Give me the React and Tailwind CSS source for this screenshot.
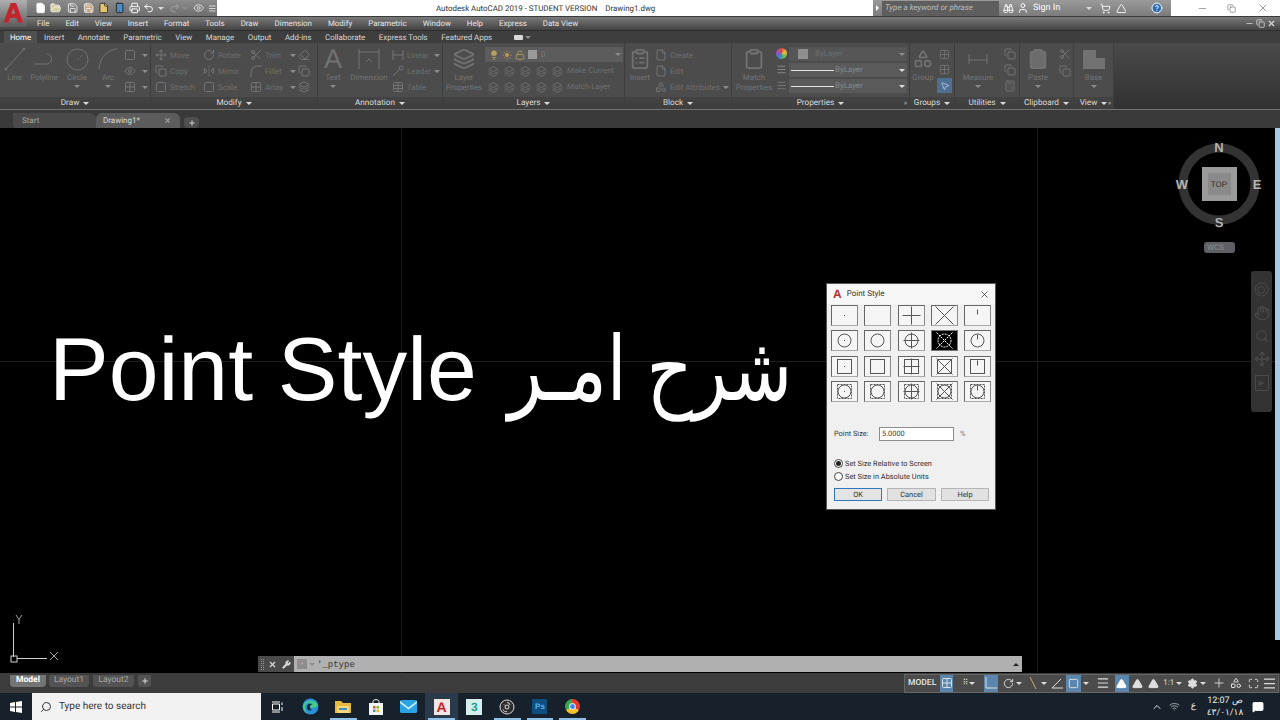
import React from "react";
import {
  Binoculars, ChevronUp, CircleHelp, Copy, Eraser, File, FlipHorizontal2, FolderOpen, Grid2x2, Hand,
  Layers, Lightbulb, LockOpen, Menu, MessageSquare, Minus, Move, Plus, Printer, Redo2, RotateCw,
  Save, Scissors, Search, Settings, ShoppingCart, Smartphone, Square, Sun, Table, Undo2, User, Wifi,
  Wrench, X, Clipboard, Calculator, Eye, Shapes, Maximize, Triangle, ClipboardList, MousePointer2,
} from "lucide-react";

const Caret = ({ dim }) => (
  <span
    className={
      dim
        ? "inline-block h-0 w-0 border-x-[3px] border-t-[3px] border-x-transparent border-t-[#8c8c8c]"
        : "inline-block h-0 w-0 border-x-[3px] border-t-[3px] border-x-transparent border-t-[#dddddd]"
    }
  />
);

const MENU = ["File", "Edit", "View", "Insert", "Format", "Tools", "Draw", "Dimension", "Modify", "Parametric", "Window", "Help", "Express", "Data View"];
const TABS = ["Insert", "Annotate", "Parametric", "View", "Manage", "Output", "Add-ins", "Collaborate", "Express Tools", "Featured Apps"];

function QuickAccess() {
  const ic = "h-[12px] w-[12px]";
  return (
    <div className="flex h-[16px] w-[190px] items-center bg-gradient-to-b from-[#8c8c8c] to-[#6e6e6e] pl-[8px] text-[#f2f2f2]">
      <File className={ic + " mr-[4px] fill-white"} />
      <FolderOpen className={ic + " mr-[5px] fill-[#d9cda0] text-[#eeeeee]"} />
      <Save className={ic + " mr-[5px] text-[#e8e8e8]"} />
      <Save className={ic + " mr-[4px] fill-[#c9a37a] text-[#e8e8e8]"} />
      <File className={ic + " mr-[4px] fill-[#e4c46c] text-[#333333]"} />
      <Smartphone className={ic + " mr-[4px] fill-[#4e8ec4] text-[#222222]"} />
      <Printer className={ic + " mr-[3px] text-white"} />
      <Undo2 className={ic + " mr-[3px] text-white"} />
      <span className="mr-[5px] flex"><Caret /></span>
      <Redo2 className={ic + " mr-[2px] text-[#a0a0a0]"} />
      <span className="mr-[5px] flex"><Caret dim /></span>
      <Eye className={ic + " mr-[4px] text-[#dddddd]"} />
      <Menu className="h-[9px] w-[9px] text-white" />
    </div>
  );
}

function TitleBar() {
  return (
    <div className="flex h-[16px] items-center bg-white pl-[27px]">
      <QuickAccess />
      <div className="ml-[219px] w-[437px] truncate text-[7.9px] leading-[17px] text-[#333333]">
        Autodesk AutoCAD 2019 - STUDENT VERSION<span className="ml-[8px]">Drawing1.dwg</span>
      </div>
      <div className="flex h-[16px] w-[298px] items-center bg-gradient-to-b from-[#9a9a9a] to-[#7c7c7c] text-[8px] text-[#222222]">
        <span className="ml-[3px] mr-[3px] h-0 w-0 border-y-[3px] border-l-[3px] border-y-transparent border-l-white" />
        <div className="flex h-[15px] w-[120px] items-center bg-[#5e5e5e] pl-[3px] italic text-[#bdbdbd]">Type a keyword or phrase</div>
        <Binoculars className="ml-[4px] h-[11px] w-[11px] text-white" />
        <User className="ml-[3px] h-[12px] w-[12px] text-white" />
        <span className="ml-[4px] w-[54px] pt-[2px] text-[9px] text-white">Sign In</span>
        <Caret />
        <ShoppingCart className="ml-[8px] h-[11px] w-[11px] text-white" />
        <Triangle className="ml-[5px] h-[11px] w-[11px] text-white" />
        <span className="ml-[2px] mr-[17px] flex"><Caret dim /></span>
        <CircleHelp className="h-[12px] w-[12px] fill-[#2f6db5] text-white" />
        <span className="ml-[2px] flex"><Caret dim /></span>
      </div>
      <div className="flex flex-1 items-center text-[#333333]">
        <Minus className="ml-[26px] h-[11px] w-[11px]" strokeWidth={1} />
        <Copy className="ml-[19px] h-[9px] w-[9px]" strokeWidth={1.2} />
        <X className="ml-[21px] h-[12px] w-[12px]" strokeWidth={1} />
      </div>
    </div>
  );
}

function MenuBar() {
  return (
    <div className="flex h-[14px] items-center border-t border-[#3a3a3a] bg-gradient-to-b from-[#7a7a7a] to-[#434343] pl-[37px] text-[7.9px] text-[#e6e6e6]">
      <div className="flex gap-x-[16px] pt-[1px]">
        {MENU.map((m) => (
          <span key={m}>{m}</span>
        ))}
      </div>
      <div className="ml-auto mr-[4px] flex items-center gap-x-[2px] text-[#dddddd]">
        <Minus className="h-[9px] w-[9px]" />
        <Copy className="h-[9px] w-[9px]" />
        <X className="h-[9px] w-[9px]" strokeWidth={3} />
      </div>
    </div>
  );
}

function RibbonTabs() {
  return (
    <div className="flex h-[13px] items-end border-t border-[#2e2e2e] bg-[#3e3e3e] pl-[4px] text-[7.9px] text-[#d6d6d6]">
      <span className="flex h-[12px] w-[33px] items-center justify-center bg-[#505050] pt-[1px] text-white">Home</span>
      <div className="ml-[7px] flex h-[12px] items-center gap-x-[13.5px] pt-[1px]">
        {TABS.map((t) => (
          <span key={t}>{t}</span>
        ))}
        <span className="ml-[8px] flex items-center gap-x-[2px]">
          <span className="h-[5px] w-[9px] rounded-[1px] bg-[#d8d8d8]" />
          <Caret dim />
        </span>
      </div>
    </div>
  );
}

// dim ribbon label, everything in the ribbon is greyed out because a dialog is open
function Big({ label, width, icon, caret }) {
  return (
    <div className={"flex flex-col items-center whitespace-nowrap text-center text-[7.9px] leading-[10px] text-[#747474] " + width}>
      <div className="flex h-[24px] items-center justify-center text-[#727272]">{icon}</div>
      <span className="mt-[1.5px]">{label}</span>
      {caret && <span className="mt-[2px] flex"><Caret dim /></span>}
    </div>
  );
}

function Small({ icon, label, caret, width }) {
  return (
    <div className={"flex h-[16px] items-center gap-x-[3px] whitespace-nowrap text-[7.9px] text-[#6e6e6e] " + width}>
      <span className="flex w-[12px] justify-center text-[#747474]">{icon}</span>
      {label && <span className="pt-[1px]">{label}</span>}
      {caret && <span className="ml-auto flex pr-[2px]"><Caret dim /></span>}
    </div>
  );
}

function Panel({ width, title, launcher, children }) {
  return (
    <div className={"flex h-[66px] shrink-0 flex-col border-r border-[#3d3d3d] " + width}>
      <div className="flex h-[54px] bg-[#4c4c4c] pt-[4px]">{children}</div>
      <div className="relative flex h-[12px] items-center justify-center gap-x-[4px] bg-gradient-to-b from-[#434343] to-[#3e3e3e] pt-[1px] text-[8.2px] text-[#dcdcdc]">
        {title}
        <Caret />
        {launcher && <span className="absolute right-[2px] text-[7px] leading-none text-[#aaaaaa]">»</span>}
      </div>
    </div>
  );
}

const I = "h-[12px] w-[12px]";

const Draw = (
  <Panel width="w-[151px]" title="Draw">
    <Big width="w-[29px]" label="Line" icon={<svg width="22" height="24" fill="none" stroke="currentColor"><path d="M2 22 20 2" /><circle cx="2" cy="22" r="1" fill="currentColor" /><circle cx="20" cy="2" r="1" fill="currentColor" /></svg>} />
    <Big width="w-[30px]" label="Polyline" icon={<svg width="24" height="16" fill="none" stroke="currentColor"><path d="M2 13H15C21 13 21 3 15 3" /></svg>} />
    <Big width="w-[36px]" label="Circle" caret icon={<svg width="23" height="23" fill="none" stroke="currentColor"><circle cx="11.5" cy="11.5" r="10.5" /><path d="M11.5 11.5 17 6" strokeDasharray="2 2" /></svg>} />
    <Big width="w-[26px]" label="Arc" caret icon={<svg width="22" height="24" fill="none" stroke="currentColor"><path d="M2 22C3 10 10 3 20 2" /></svg>} />
    <div className="w-[29px] pl-[3px]">
      <Small icon={<Square className={I} />} caret />
      <Small icon={<Eye className={I} />} caret />
      <Small icon={<Grid2x2 className={I} />} caret />
    </div>
  </Panel>
);

const Modify = (
  <Panel width="w-[167px]" title="Modify">
    <div className="w-[52px] pl-[4px]">
      <Small label="Move" icon={<Move className={I} />} />
      <Small label="Copy" icon={<Copy className={I} />} />
      <Small label="Stretch" icon={<Square className={I} />} />
    </div>
    <div className="w-[47px]">
      <Small label="Rotate" icon={<RotateCw className={I} />} />
      <Small label="Mirror" icon={<FlipHorizontal2 className={I} />} />
      <Small label="Scale" icon={<Square className={I} />} />
    </div>
    <div className="w-[48px]">
      <Small caret label="Trim" icon={<Scissors className={I} />} />
      <Small caret label="Fillet" icon={<svg width="12" height="12" fill="none" stroke="currentColor"><path d="M1 12V8C1 4 4 1 8 1H12" /></svg>} />
      <Small caret label="Array" icon={<Grid2x2 className={I} />} />
    </div>
    <div className="w-[19px]">
      <Small icon={<Eraser className={I} />} />
      <Small icon={<Copy className={I} />} />
      <Small icon={<Layers className={I} />} />
    </div>
  </Panel>
);

const Annotation = (
  <Panel width="w-[125px]" title="Annotation">
    <Big width="w-[30px]" label="Text" caret icon={<span className="font-['Liberation_Sans',sans-serif] text-[27px] leading-[24px]">A</span>} />
    <Big width="w-[42px]" label="Dimension" icon={<svg width="22" height="22" fill="none" stroke="currentColor"><path d="M1 1V21M21 1V21M1 4H21M8 14l3-3 3 3" /></svg>} />
    <div className="w-[52px] pl-[2px]">
      <Small caret label="Linear" icon={<svg width="12" height="10" fill="none" stroke="currentColor"><path d="M1 0V10M11 0V10M1 5H11" /></svg>} />
      <Small caret label="Leader" icon={<svg width="12" height="12" fill="none" stroke="currentColor"><path d="M1 11 7 5" /><circle cx="9" cy="3" r="2" /></svg>} />
      <Small label="Table" icon={<Table className={I} />} />
    </div>
  </Panel>
);

const Layer = () => <Layers className="h-[11px] w-[11px]" />;

const LayersPanel = (
  <Panel width="w-[182px]" title="Layers">
    <Big width="w-[42px]" label={<>Layer<br />Properties</>} icon={<Layers className="h-[22px] w-[22px]" />} />
    <div className="w-[138px]">
      <div className="flex h-[15px] items-center gap-x-[3px] rounded-[1px] bg-[#5c5c5c] pl-[4px] pr-[2px] text-[7.9px] text-[#7c7c7c]">
        <Lightbulb className="h-[10px] w-[10px] fill-[#b6a05a] text-[#b6a05a]" />
        <Sun className="h-[10px] w-[10px] fill-[#b8944f] text-[#b8944f]" />
        <LockOpen className="h-[10px] w-[10px] text-[#b6a05a]" />
        <span className="h-[9px] w-[9px] bg-[#9a9a9a]" />
        <span className="ml-[1px]">0</span>
        <span className="ml-auto flex"><Caret dim /></span>
      </div>
      <div className="mt-[1px] flex h-[16px] items-center gap-x-[5px] whitespace-nowrap pl-[3px] text-[7.9px] text-[#6e6e6e]">
        <Layer /><Layer /><Layer /><Layer /><Layer />
        <span className="-ml-[1px]">Make Current</span>
      </div>
      <div className="flex h-[16px] items-center gap-x-[5px] whitespace-nowrap pl-[3px] text-[7.9px] text-[#6e6e6e]">
        <Layer /><Layer /><Layer /><Layer /><Layer />
        <span className="-ml-[1px]">Match Layer</span>
      </div>
    </div>
  </Panel>
);

const Block = (
  <Panel width="w-[107px]" title="Block">
    <Big width="w-[30px]" label="Insert" icon={<ClipboardList className="h-[22px] w-[22px]" />} />
    <div className="w-[76px]">
      <Small label="Create" icon={<File className={I} />} />
      <Small label="Edit" icon={<File className={I} />} />
      <Small caret label="Edit Attributes" icon={<Shapes className={I} />} />
    </div>
  </Panel>
);

const ComboLine = () => (
  <div className="flex h-[14px] w-[118px] items-center rounded-[1px] bg-[#5a5a5a] pl-[2px] pr-[2px] text-[7.9px] text-[#8a8a8a]">
    <span className="h-px w-[43px] bg-[#e4e4e4]" />
    <span className="ml-[1px]">ByLayer</span>
    <span className="ml-auto flex"><Caret /></span>
  </div>
);

const Properties = (
  <Panel width="w-[178px]" title="Properties" launcher>
    <Big width="w-[44px]" label={<>Match<br />Properties</>} icon={<Clipboard className="h-[22px] w-[22px]" />} />
    <div className="w-[13px] pt-[1px]">
      <span className="block h-[11px] w-[11px] rounded-full bg-[conic-gradient(#e0483e,#e8c23c,#5cb85c,#3f7fd0,#a24fc0,#e0483e)]" />
      <Menu className="mt-[5px] h-[11px] w-[11px] text-[#8a8a8a]" />
      <Menu className="mt-[5px] h-[11px] w-[11px] text-[#787878]" />
    </div>
    <div className="flex w-[118px] flex-col gap-y-[2px]">
      <div className="flex h-[14px] items-center rounded-[1px] bg-[#565656] pl-[9px] pr-[2px] text-[7.9px] text-[#6e6e6e]">
        <span className="h-[10px] w-[10px] bg-[#8f8f8f]" />
        <span className="ml-[7px]">ByLayer</span>
        <span className="ml-auto flex"><Caret dim /></span>
      </div>
      <ComboLine />
      <ComboLine />
    </div>
  </Panel>
);

const Groups = (
  <Panel width="w-[45px]" title="Groups">
    <Big width="w-[26px]" label="Group" icon={<Shapes className="h-[20px] w-[20px]" />} />
    <div className="flex w-[17px] flex-col items-center text-[#727272]">
      <Grid2x2 className="mt-[2px] h-[11px] w-[11px]" />
      <Grid2x2 className="mt-[4px] h-[11px] w-[11px]" />
      <span className="mt-[3px] flex h-[15px] w-[15px] items-center justify-center bg-[#4d6f94]">
        <MousePointer2 className="h-[10px] w-[10px] text-[#b5c4d4]" />
      </span>
    </div>
  </Panel>
);

const Utilities = (
  <Panel width="w-[65px]" title="Utilities">
    <Big width="w-[46px]" label="Measure" caret icon={<svg width="20" height="10" fill="none" stroke="currentColor"><path d="M1 0V10M19 0V10M1 6H19" /></svg>} />
    <div className="flex w-[18px] flex-col items-center gap-y-[4px] pt-[1px] text-[#727272]">
      <Copy className={I} />
      <Copy className={I} />
      <Calculator className={I} />
    </div>
  </Panel>
);

const ClipboardPanel = (
  <Panel width="w-[54px]" title="Clipboard">
    <Big width="w-[36px]" label="Paste" caret icon={<Clipboard className="h-[22px] w-[22px] fill-[#6c6c6c]" />} />
    <div className="flex w-[17px] flex-col items-center gap-y-[5px] pt-[1px] text-[#727272]">
      <Scissors className={I} />
      <Copy className={I} />
    </div>
  </Panel>
);

const ViewPanel = (
  <Panel width="w-[40px]" title="View" launcher>
    <Big width="w-[40px]" label="Base" caret icon={<svg width="22" height="20" fill="currentColor"><path d="M0 1H13V9H22V20H0Z" /></svg>} />
  </Panel>
);

function Ribbon() {
  return (
    <div className="flex h-[67px] border-b border-[#737373] bg-gradient-to-b from-[#4a4a4a] to-[#323232]">
      {Draw}{Modify}{Annotation}{LayersPanel}{Block}{Properties}{Groups}{Utilities}{ClipboardPanel}{ViewPanel}
    </div>
  );
}

function DocTabs() {
  return (
    <div className="flex h-[18px] items-end bg-[#3a3a3a] pl-[13px] text-[8px]">
      <span className="flex h-[15px] w-[83px] items-center rounded-tr-[6px] rounded-bl-[3px] bg-[#4a4a4a] pl-[9px] text-[#a8a8a8]">Start</span>
      <span className="flex h-[15px] w-[84px] items-center rounded-tl-[6px] rounded-tr-[6px] bg-[#5c5c5c] pl-[7px] text-[#dddddd]">
        Drawing1*
        <X className="ml-auto mr-[9px] h-[7px] w-[7px] text-[#9a9a9a]" strokeWidth={4} />
      </span>
      <span className="ml-[4px] flex h-[11px] w-[15px] items-center justify-center rounded-[4px] bg-[#4e4e4e] text-[#cccccc]">
        <Plus className="h-[8px] w-[8px]" strokeWidth={3} />
      </span>
    </div>
  );
}

function PointSymbol({ row, col, selected }) {
  const c = selected ? "#ffffff" : "#555555";
  const dash = selected ? "2 1" : undefined;
  const cx = 12.5;
  const cy = 9.5;
  const a = row === 0 ? 9 : 8;
  return (
    <svg width="25" height="19" fill="none" stroke={c} strokeWidth="1" strokeDasharray={dash}>
      {col === 0 && <rect x="12" y="9" width="1" height="1" fill={c} stroke="none" />}
      {col === 2 && <path d={`M${cx - a} ${cy}H${cx + a}M${cx} ${cy - a}V${cy + a}`} />}
      {col === 3 && <path d={`M${cx - a} ${cy - a}L${cx + a} ${cy + a}M${cx + a} ${cy - a}L${cx - a} ${cy + a}`} />}
      {col === 4 && <path d={`M${cx} ${cy - 6}V${cy - 1}`} />}
      {(row === 1 || row === 3) && <circle cx={cx} cy={cy} r="6.5" />}
      {(row === 2 || row === 3) && <rect x={cx - 7} y={cy - 7} width="14" height="14" strokeDasharray={row === 3 ? "2 1" : dash} />}
    </svg>
  );
}

function PointStyleDialog() {
  return (
    <div className="absolute left-[827px] top-[156px] flex h-[225px] w-[168px] flex-col bg-[#f0f0f0] text-[7.4px] text-[#333333] outline outline-1 outline-[#555555]">
      <div className="flex h-[20px] items-center bg-[#f7f7f7] pl-[6px] pr-[5px] text-[8px]">
        <span className="font-['Liberation_Sans',sans-serif] text-[12px] font-bold leading-none text-[#b5322c]">A</span>
        <span className="ml-[5px]">Point Style</span>
        <X className="ml-auto h-[11px] w-[11px] text-[#222222]" strokeWidth={1.5} />
      </div>
      <div className="mt-[1px] grid w-[160px] grid-cols-[repeat(5,27px)] justify-between gap-y-[4.3px] self-center">
        {[0, 1, 2, 3].flatMap((row) =>
          [0, 1, 2, 3, 4].map((col) => {
            const selected = row === 1 && col === 3;
            return (
              <div
                key={row + "-" + col}
                className={selected
                  ? "flex h-[21px] w-[27px] items-center justify-center border border-[#777777] bg-black"
                  : "flex h-[21px] w-[27px] items-center justify-center border border-[#666666] border-b-[#aaaaaa] border-r-[#888888] bg-[#f5f5f5]"}
              >
                <PointSymbol row={row} col={col} selected={selected} />
              </div>
            );
          })
        )}
      </div>
      <div className="mt-[25px] flex h-[14px] items-center pl-[7px]">
        <span className="w-[45px]">Point Size:</span>
        <span className="flex h-[14px] w-[75px] items-center border border-[#8c8c8c] bg-white pl-[2px]">5.0000</span>
        <span className="ml-[6px] text-[#777777]">%</span>
      </div>
      <div className="mt-[16px] flex h-[13px] items-center pl-[7px]">
        <span className="flex h-[9px] w-[9px] items-center justify-center rounded-full border border-[#444444] bg-white">
          <span className="h-[5px] w-[5px] rounded-full bg-[#222222]" />
        </span>
        <span className="ml-[2px]">Set Size Relative to Screen</span>
      </div>
      <div className="flex h-[13px] items-center pl-[7px]">
        <span className="h-[9px] w-[9px] rounded-full border border-[#444444] bg-white" />
        <span className="ml-[2px]">Set Size in Absolute Units</span>
      </div>
      <div className="mt-[5px] flex gap-x-[5px] pl-[7px]">
        <span className="flex h-[13px] w-[48px] items-center justify-center border border-[#2f78c0] bg-[#e4e4e4]">OK</span>
        <span className="flex h-[13px] w-[49px] items-center justify-center border border-[#b5b5b5] bg-[#e1e1e1]">Cancel</span>
        <span className="flex h-[13px] w-[48px] items-center justify-center border border-[#b5b5b5] bg-[#e1e1e1]">Help</span>
      </div>
    </div>
  );
}

function ViewCube() {
  return (
    <div className="absolute left-[1170px] top-[6px]">
      <svg width="100" height="100" className="font-['Liberation_Sans',sans-serif]">
        <circle cx="49" cy="50" r="36" fill="none" stroke="#333333" strokeWidth="9" />
        <rect x="32" y="33" width="35" height="34" fill="#9a9a9a" />
        <rect x="38" y="39" width="23" height="22" fill="#8a8a8a" />
        <text x="49" y="53" textAnchor="middle" fontSize="8" fill="#2b2b2b">TOP</text>
        <g fontSize="13" fontWeight="700" fill="#b4b4b4" textAnchor="middle">
          <text x="49" y="18">N</text>
          <text x="49" y="93">S</text>
          <text x="87" y="55">E</text>
          <text x="12" y="55">W</text>
        </g>
      </svg>
      <div className="ml-[34px] mt-[8px] flex h-[11px] w-[31px] items-center rounded-[3px] bg-[#5f5f66] pl-[3px] text-[8px] text-[#8b8b8f]">WCS</div>
    </div>
  );
}

function NavBar() {
  return (
    <div className="absolute left-[1251px] top-[143px] flex h-[141px] w-[21px] flex-col items-center gap-y-[8px] rounded-[3px] bg-[#333333] pt-[11px] text-[#4a4a4a]">
      <svg width="15" height="15" fill="none" stroke="currentColor"><circle cx="7.5" cy="7.5" r="6.5" /><circle cx="7" cy="8" r="3.5" /></svg>
      <Hand className="h-[16px] w-[16px]" />
      <Search className="h-[14px] w-[14px]" />
      <Move className="h-[16px] w-[16px]" />
      <span className="flex h-[16px] w-[14px] items-center justify-center border border-current text-[7px]">▶</span>
    </div>
  );
}

function UcsIcon() {
  return (
    <svg width="56" height="52" className="absolute left-[8px] bottom-[8px] text-[#cfcfcf]" fill="none" stroke="currentColor">
      <path d="M5.5 10V44M9 45.5H39" />
      <rect x="3" y="43" width="6" height="6" />
      <path d="M8 2 11 6.5 14 2M11 6.5V11" strokeWidth="0.8" />
      <path d="M42 39 50 47M50 39 42 47" strokeWidth="0.8" />
    </svg>
  );
}

function CommandLine() {
  return (
    <div className="absolute bottom-[1px] left-[258px] flex h-[16px] w-[764px] items-center bg-[#b0b0b0]">
      <div className="flex h-[16px] w-[36px] items-center bg-[#4a4a4a] pl-[3px] text-[#dddddd]">
        <span className="h-[11px] w-[3px] border-x border-dotted border-[#999999]" />
        <X className="ml-[4px] h-[9px] w-[9px]" strokeWidth={3} />
        <Wrench className="ml-[5px] h-[9px] w-[9px] fill-[#dddddd]" />
      </div>
      <span className="ml-[3px] flex h-[10px] w-[10px] items-center justify-center bg-[#8e8e8e] text-[6px] leading-none text-[#dddddd]">›</span>
      <span className="ml-[2px] mr-[2px] flex"><Caret dim /></span>
      <span className="mt-[2px] font-['Liberation_Mono',monospace] text-[9px] leading-[14px] text-[#333333]">'_ptype</span>
      <span className="ml-auto mr-[3px] h-0 w-0 border-x-[3px] border-b-[3px] border-x-transparent border-b-[#222222]" />
    </div>
  );
}

function Canvas() {
  return (
    <div className="relative flex-1 overflow-hidden bg-black pl-[49px] pt-[186px]">
      <span className="absolute bottom-0 left-[401px] top-0 w-px bg-[#1a1a1a]" />
      <span className="absolute bottom-0 left-[1037px] top-0 w-px bg-[#1a1a1a]" />
      <span className="absolute left-0 right-0 top-[233px] h-px bg-[#1f1f1f]" />
      <h1 className="relative flex whitespace-nowrap font-['Liberation_Sans','DejaVu_Sans',sans-serif] text-[89.5px] font-normal leading-[110px] text-white">
        <span>Point Style</span>
        <span className="ml-[31px] inline-block origin-left scale-x-[0.8]">شرح امـر</span>
      </h1>
      <span className="absolute bottom-[33px] right-0 top-0 w-[5px] bg-[#a9c8e4]" />
      <ViewCube />
      <NavBar />
      <PointStyleDialog />
      <UcsIcon />
      <CommandLine />
    </div>
  );
}

function StatusBtn({ w, active, children }) {
  return (
    <span className={(active ? "bg-[#5a86ad] " : "") + "flex h-[17px] items-center justify-center gap-x-[2px] " + w}>
      {children}
    </span>
  );
}

const S = "h-[14px] w-[14px]";

function StatusBar() {
  return (
    <div className="ml-auto mr-[1px] flex h-[19px] w-[375px] items-center border border-[#666666] bg-[#4b4b4b] pl-[3px] text-[#dedede]">
      <span className="w-[33px] text-[8.5px] font-semibold">MODEL</span>
      <StatusBtn w="w-[14px]" active><Grid2x2 className="h-[12px] w-[12px]" /></StatusBtn>
      <StatusBtn w="w-[32px]"><span className="tracking-[-1px] text-[8px] leading-none">⠿</span><Caret /></StatusBtn>
      <StatusBtn w="w-[14px]" active><svg width="12" height="12" fill="none" stroke="currentColor"><path d="M1 0V11H12" /></svg></StatusBtn>
      <StatusBtn w="w-[30px]"><RotateCw className="h-[11px] w-[11px]" /><Caret /></StatusBtn>
      <StatusBtn w="w-[22px]"><svg width="12" height="12" fill="none" stroke="#c9a86a"><path d="M3 0 9 12" /></svg><Caret /></StatusBtn>
      <StatusBtn w="w-[19px]"><svg width="12" height="12" fill="none" stroke="currentColor"><path d="M1 11 10 2M1 11H12" /></svg></StatusBtn>
      <StatusBtn w="w-[15px]" active><Square className="h-[11px] w-[11px]" /></StatusBtn>
      <StatusBtn w="w-[11px]"><Caret /></StatusBtn>
      <StatusBtn w="w-[24px]"><Menu className={S} /></StatusBtn>
      <StatusBtn w="w-[15px]" active><Triangle className="h-[11px] w-[11px] fill-white text-white" /></StatusBtn>
      <StatusBtn w="w-[17px]"><Triangle className="h-[11px] w-[11px] fill-[#dedede]" /></StatusBtn>
      <StatusBtn w="w-[17px]"><Triangle className="h-[11px] w-[11px] fill-[#dedede]" /></StatusBtn>
      <StatusBtn w="w-[22px]"><span className="text-[8px]">1:1</span><Caret /></StatusBtn>
      <StatusBtn w="w-[28px]"><Settings className="h-[11px] w-[11px] fill-[#dedede]" /><Caret /></StatusBtn>
      <StatusBtn w="w-[17px]"><Plus className={S} strokeWidth={1.5} /></StatusBtn>
      <StatusBtn w="w-[19px]"><Shapes className="h-[12px] w-[12px]" /></StatusBtn>
      <StatusBtn w="w-[17px]"><Maximize className="h-[11px] w-[11px]" /></StatusBtn>
      <StatusBtn w="w-[17px]"><Menu className="h-[15px] w-[15px]" /></StatusBtn>
    </div>
  );
}

function LayoutTabs() {
  return (
    <div className="flex h-[20px] items-center bg-[#3c3c3c] pl-[10px] text-[8.5px] text-[#a8a8a8]">
      <span className="-mt-[5px] flex h-[12px] w-[36px] items-center justify-center rounded-b-[4px] bg-[#757575] font-bold text-white">Model</span>
      <span className="-mt-[5px] ml-[3px] flex h-[12px] w-[40px] items-center justify-center rounded-b-[4px] bg-[#535353]">Layout1</span>
      <span className="-mt-[5px] ml-[4px] flex h-[12px] w-[41px] items-center justify-center rounded-b-[4px] bg-[#535353]">Layout2</span>
      <span className="-mt-[5px] ml-[4px] flex h-[12px] w-[13px] items-center justify-center rounded-b-[3px] bg-[#535353] text-[#dddddd]">
        <Plus className="h-[8px] w-[8px]" strokeWidth={3} />
      </span>
      <StatusBar />
    </div>
  );
}

function TaskIcon({ open, active, children }) {
  return (
    <span className={(active ? "bg-[#2b3a4a] " : "") + "relative flex h-[27px] w-[32.8px] items-center justify-center"}>
      {children}
      {open && <span className="absolute bottom-0 left-[3px] right-[3px] h-[2px] bg-[#8fc1e8]" />}
    </span>
  );
}

function Taskbar() {
  return (
    <div className="flex h-[27px] items-center bg-[#17212b] text-white">
      <span className="flex h-[27px] w-[32px] items-center justify-center">
        <svg width="12" height="12" fill="#ffffff"><path d="M0 2 5 1V5.5H0ZM6 1 12 0V5.5H6ZM0 6.5H5V11L0 10ZM6 6.5H12V12L6 11Z" /></svg>
      </span>
      <div className="flex h-[27px] w-[229px] items-center bg-[#f2f2f2] pl-[8px] text-[10px] text-[#333333]">
        <Search className="h-[12px] w-[12px] -scale-x-100 text-[#333333]" />
        <span className="ml-[7px]">Type here to search</span>
      </div>
      <span className="ml-[8px] flex w-[16px] justify-center">
        <svg width="12" height="12" fill="none" stroke="#ffffff"><path d="M1.5 3H8.5V9H1.5ZM1 1H9M1 11H9M11 1.5V4M11 6V10" /></svg>
      </span>
      <div className="ml-[9px] flex">
        <TaskIcon>
          <svg width="17" height="17" viewBox="0 0 17 17"><circle cx="8.5" cy="8.5" r="8" fill="#2a8fd8" /><path d="M1 8.5C2 2 12 0 16 7 15 10 9 11 8 9 7 7 10 6 11 7 8 3 3 5 3 10 3 14 8 17 12 15 7 17 1 14 1 8.5Z" fill="#46c98a" /><path d="M5 9C5 6 9 5 10 6.5 7 7 7 11 10 12 7 13 5 12 5 9Z" fill="#17212b" /></svg>
        </TaskIcon>
        <TaskIcon open>
          <svg width="16" height="14"><path d="M0 1H6L8 3H16V13H0Z" fill="#e8b93e" /><rect x="2" y="6" width="12" height="7" fill="#f6d878" /><rect x="4" y="8" width="8" height="2" fill="#3d8fcf" /></svg>
        </TaskIcon>
        <TaskIcon>
          <svg width="16" height="16" fill="none"><rect x="1" y="4" width="14" height="12" fill="#f4f4f4" /><path d="M5 4V2.5C5 0 11 0 11 2.5V4" stroke="#f4f4f4" /><rect x="5" y="7" width="2.5" height="2.5" fill="#e2512c" /><rect x="8.5" y="7" width="2.5" height="2.5" fill="#7db928" /><rect x="5" y="10.5" width="2.5" height="2.5" fill="#2c9ad8" /><rect x="8.5" y="10.5" width="2.5" height="2.5" fill="#f2b813" /></svg>
        </TaskIcon>
        <TaskIcon>
          <svg width="17" height="13"><rect width="17" height="13" rx="1.5" fill="#2aa3e3" /><path d="M0 1 8.5 7.5 17 1V3L8.5 9.5 0 3Z" fill="#d4f0ff" /></svg>
        </TaskIcon>
        <TaskIcon open active>
          <span className="flex h-[16px] w-[16px] items-center justify-center bg-[#f2e6e4] font-['Liberation_Sans',sans-serif] text-[14px] font-bold leading-none text-[#c3252c]">A</span>
        </TaskIcon>
        <TaskIcon>
          <span className="flex h-[16px] w-[16px] items-center justify-center bg-[#d4efec] font-['Liberation_Sans',sans-serif] text-[12px] font-bold leading-none text-[#1f9c90]">3</span>
        </TaskIcon>
        <TaskIcon open>
          <svg width="16" height="16" fill="none" stroke="#dddddd"><circle cx="8" cy="8" r="7" fill="#2c2c2c" /><circle cx="8" cy="8" r="2" /><path d="M8 3.5A3 3 0 0 1 11 6M4 10.5A3 3 0 0 0 8 12.5M5 5.5 6 6.5" /></svg>
        </TaskIcon>
        <TaskIcon open>
          <span className="flex h-[15px] w-[15px] items-center justify-center bg-[#0e4f80] font-['Liberation_Sans',sans-serif] text-[8px] font-bold leading-none text-[#4fb3f0]">Ps</span>
        </TaskIcon>
        <TaskIcon open>
          <span className="flex h-[15px] w-[15px] items-center justify-center rounded-full bg-[conic-gradient(#e3392b_0deg,#e3392b_120deg,#f6c22e_120deg,#f6c22e_240deg,#36a852_240deg)]">
            <span className="h-[7px] w-[7px] rounded-full border border-white bg-[#4285f4]" />
          </span>
        </TaskIcon>
      </div>
      <div className="ml-auto flex items-center pr-[16px] font-['Roboto','DejaVu_Sans',sans-serif] text-[#eeeeee]">
        <ChevronUp className="h-[12px] w-[12px]" />
        <Wifi className="ml-[6px] h-[11px] w-[11px] text-[#aaaaaa]" />
        <span className="ml-[11px] text-[9px]">ع</span>
        <div className="ml-[11px] flex w-[36px] flex-col items-center whitespace-nowrap text-[9px] leading-[12px]">
          <span>12:07 ص</span>
          <span>٤٣/٠١/١٨</span>
        </div>
        <MessageSquare className="ml-[9px] h-[12px] w-[12px] fill-white" />
      </div>
    </div>
  );
}

export default function App() {
  return (
    <div className="flex h-[720px] w-[1280px] flex-col overflow-hidden bg-black font-['Roboto','DejaVu_Sans',sans-serif] [text-rendering:geometricPrecision]">
      <TitleBar />
      <MenuBar />
      <RibbonTabs />
      <Ribbon />
      <DocTabs />
      <Canvas />
      <LayoutTabs />
      <Taskbar />

      {/* application button sits over the title and menu bars */}
      <div className="absolute left-0 top-0 flex h-[27px] w-[27px] items-center justify-center rounded-br-[2px] bg-gradient-to-b from-[#b0b0b0] to-[#5c5c5c]">
        <span className="font-['Liberation_Sans',sans-serif] text-[27px] font-bold leading-[27px] text-[#c3252c] [-webkit-text-stroke:1px_#c3252c]">A</span>
      </div>
    </div>
  );
}
